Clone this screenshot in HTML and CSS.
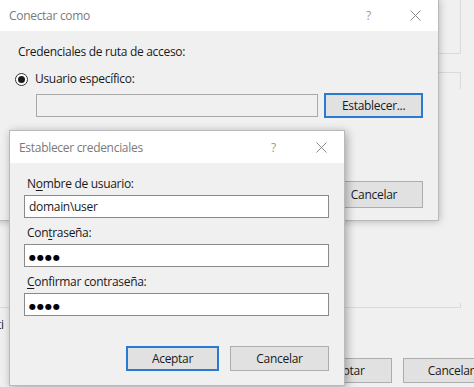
FILE: index.html
```html
<!DOCTYPE html>
<html>
  <head>
    <meta charset="utf-8" />
    <title>Establecer credenciales</title>
    <link rel="stylesheet" href="styles.css">
  </head>
  <body>
    <div class="desk">
      <!-- ventana de fondo (casi toda tapada) -->
      <div class="app">
        <div class="group top"></div>
        <div class="group second"></div>
        <div class="app-spacer"></div>
        <div class="group third"></div>
        <div class="app-text">ti</div>
        <div class="app-footer">
          <button class="btn">Aceptar</button>
          <button class="btn">Cancelar</button>
        </div>
      </div>

      <!-- 1. Conectar como -->
      <div class="window connect">
        <div class="titlebar">
          <span class="title">Conectar como</span>
          <span class="help">?</span>
          <span class="close">
            <svg width="11" height="11" viewBox="0 0 11 11"><path d="M0.5 0.5L10.5 10.5M10.5 0.5L0.5 10.5" stroke="#8a8a8a" stroke-width="1"/></svg>
          </span>
        </div>
        <div class="body">
          <div class="label">Credenciales de ruta de acceso:</div>
          <div class="radio-row">
            <span class="radio"><span class="dot"></span></span>
            <span>Usuario específico:</span>
          </div>
          <div class="field-row">
            <div class="textbox disabled"></div>
            <button class="btn default">Establecer...</button>
          </div>
          <div class="connect-footer">
            <button class="btn">Cancelar</button>
          </div>
        </div>
      </div>

      <!-- 2. Establecer credenciales -->
      <div class="window creds">
        <div class="titlebar">
          <span class="title">Establecer credenciales</span>
          <span class="help">?</span>
          <span class="close">
            <svg width="11" height="11" viewBox="0 0 11 11"><path d="M0.5 0.5L10.5 10.5M10.5 0.5L0.5 10.5" stroke="#8a8a8a" stroke-width="1"/></svg>
          </span>
        </div>
        <div class="body">
          <div class="label">N<u>o</u>mbre de usuario:</div>
          <div class="textbox">domain\user</div>
          <div class="label">Con<u>t</u>raseña:</div>
          <div class="textbox"><span class="dots">●●●●</span></div>
          <div class="label"><u>C</u>onfirmar contraseña:</div>
          <div class="textbox"><span class="dots">●●●●</span></div>
          <div class="buttons">
            <button class="btn default">Aceptar</button>
            <button class="btn">Cancelar</button>
          </div>
        </div>
      </div>
    </div>
  </body>
</html>
```

FILE: styles.css
```css
/* base */
body {
  margin: 0;
  padding: 0;
  background-color: #f0f0f0;
  font-family: "Open Sans", "Noto Sans", sans-serif;
  font-size: 12px;
  letter-spacing: -0.3px;
  color: #1a1a1a;
}
.desk {
  position: relative;
  width: 474px;
  height: 387px;
  overflow: hidden;
}

/* botones y cajas estilo Windows */
.btn {
  font-family: inherit;
  font-size: 12px;
  letter-spacing: -0.3px;
  color: #1a1a1a;
  background-color: #e1e1e1;
  border: 1px solid #adadad;
  height: 25px;
  width: 96px;
  padding: 0;
}
.btn.default {
  border: 2px solid #2a7ad0;
}
.textbox {
  box-sizing: border-box;
  height: 23px;
  border: 1px solid #8a8a8a;
  background-color: #fff;
  padding: 0 4px;
  line-height: 21px;
}
.textbox.disabled {
  background-color: #f0f0f0;
  border-color: #a8a8a8;
}
.dots {
  font-family: "DejaVu Sans", sans-serif;
  font-size: 8px;
  letter-spacing: 1px;
  color: #000;
}

/* 1. ventana de fondo */
.app {
  position: absolute;
  left: 0;
  top: 0;
  width: 474px;
  height: 387px;
  display: flex;
  flex-direction: column;
}
.group {
  box-sizing: border-box;
  width: 461px;
  flex-shrink: 0;
  border-right: 1px solid #dadada;
}
.group.top {
  height: 54px;
  border-bottom: 1px solid #dadada;
}
.group.second {
  margin-top: 18px;
  height: 17px;
  border-top: 1px solid #dadada;
}
.app-spacer {
  height: 214px;
  flex-shrink: 0;
}
.group.third {
  height: 5px;
  border-bottom: 1px solid #dadada;
}
.app-text {
  margin-top: 9px;
  margin-left: -3px;
  line-height: 16px;
  color: #1a1a1a;
}
.app-footer {
  display: flex;
  gap: 11px;
  margin-top: 25px;
  margin-left: 296px;
}
.app-footer .btn {
  width: 96px;
  flex-shrink: 0;
}

/* 2. ventanas de diálogo */
.window {
  position: absolute;
  background-color: #f0f0f0;
  border: 1px solid #b9b9b9;
  box-shadow: 0 0 8px rgba(0, 0, 0, 0.28);
  display: flex;
  flex-direction: column;
}
.titlebar {
  display: flex;
  align-items: center;
  background-color: #fff;
  height: 31px;
  flex-shrink: 0;
}
.title {
  flex: 1;
  color: #7a7a7a;
  font-size: 12px;
}
.help {
  color: #9a9a9a;
  font-size: 12px;
}
.close {
  display: flex;
  width: 46px;
  justify-content: center;
}
.label {
  line-height: 16px;
}
u {
  text-decoration-thickness: 1px;
  text-underline-offset: 2px;
}

/* Conectar como */
.connect {
  left: -20px;
  top: -1px;
  width: 457px;
  height: 220px;
}
.connect .title {
  padding-left: 28px;
}
.connect .help {
  margin-right: 21px;
}
.connect .body {
  padding: 13px 15px 0 37px;
}
.radio-row {
  display: flex;
  align-items: center;
  gap: 7px;
  margin-top: 11px;
  margin-left: -3px;
  line-height: 16px;
}
.radio {
  box-sizing: border-box;
  width: 13px;
  height: 13px;
  border: 1px solid #333;
  border-radius: 50%;
  display: flex;
  align-items: center;
  justify-content: center;
  background-color: #fff;
}
.dot {
  width: 7px;
  height: 7px;
  border-radius: 50%;
  background-color: #1a1a1a;
}
.field-row {
  display: flex;
  align-items: center;
  gap: 6px;
  margin-top: 6px;
  margin-left: 18px;
}
.field-row .textbox {
  width: 283px;
}
.field-row .btn {
  width: 99px;
  height: 25px;
}
.connect-footer {
  display: flex;
  justify-content: flex-end;
  margin-top: 63px;
}
.connect-footer .btn {
  width: 98px;
  height: 27px;
}

/* Establecer credenciales */
.creds {
  left: 9px;
  top: 130px;
  width: 334px;
  height: 254px;
  box-shadow: 2px 2px 9px rgba(0, 0, 0, 0.32);
}
.creds .titlebar {
  height: 32px;
}
.creds .title {
  padding-left: 9px;
}
.creds .help {
  margin-right: 22px;
}
.creds .body {
  padding: 13px 15px 0 14px;
  display: flex;
  flex-direction: column;
}
.creds .label {
  padding-left: 3px;
  margin-bottom: 3px;
}
.creds .textbox {
  margin-bottom: 7px;
}
.buttons {
  display: flex;
  justify-content: flex-end;
  gap: 11px;
  margin-top: 23px;
}
.buttons .btn {
  width: 93px;
}
.buttons .btn + .btn {
  width: 99px;
}
```
